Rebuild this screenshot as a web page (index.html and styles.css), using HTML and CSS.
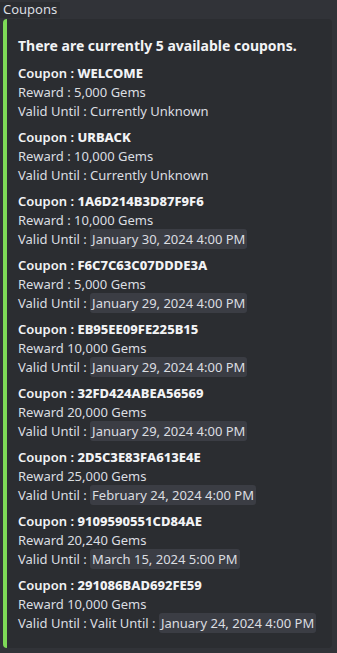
FILE: index.html
```html
<!DOCTYPE html>
<html lang="en">
<head>
  <meta charset="UTF-8">
  <title>Coupons</title>
  <link rel="stylesheet" href="styles.css">
</head>
<body>
  <div class="label">Coupons</div>

  <div class="embed">
    <div class="title">There are currently 5 available coupons.</div>

    <div class="coupon">
      <div class="code">Coupon : <b>WELCOME</b></div>
      <div>Reward : 5,000 Gems</div>
      <div>Valid Until : Currently Unknown</div>
    </div>

    <div class="coupon">
      <div class="code">Coupon : <b>URBACK</b></div>
      <div>Reward : 10,000 Gems</div>
      <div>Valid Until : Currently Unknown</div>
    </div>

    <div class="coupon">
      <div class="code">Coupon : <b>1A6D214B3D87F9F6</b></div>
      <div>Reward : 10,000 Gems</div>
      <div>Valid Until : <span class="time">January 30, 2024 4:00 PM</span></div>
    </div>

    <div class="coupon">
      <div class="code">Coupon : <b>F6C7C63C07DDDE3A</b></div>
      <div>Reward : 5,000 Gems</div>
      <div>Valid Until : <span class="time">January 29, 2024 4:00 PM</span></div>
    </div>

    <div class="coupon">
      <div class="code">Coupon : <b>EB95EE09FE225B15</b></div>
      <div>Reward 10,000 Gems</div>
      <div>Valid Until : <span class="time">January 29, 2024 4:00 PM</span></div>
    </div>

    <div class="coupon">
      <div class="code">Coupon : <b>32FD424ABEA56569</b></div>
      <div>Reward 20,000 Gems</div>
      <div>Valid Until : <span class="time">January 29, 2024 4:00 PM</span></div>
    </div>

    <div class="coupon">
      <div class="code">Coupon : <b>2D5C3E83FA613E4E</b></div>
      <div>Reward 25,000 Gems</div>
      <div>Valid Until : <span class="time">February 24, 2024 4:00 PM</span></div>
    </div>

    <div class="coupon">
      <div class="code">Coupon : <b>9109590551CD84AE</b></div>
      <div>Reward 20,240 Gems</div>
      <div>Valid Until : <span class="time">March 15, 2024 5:00 PM</span></div>
    </div>

    <div class="coupon">
      <div class="code">Coupon : <b>291086BAD692FE59</b></div>
      <div>Reward 10,000 Gems</div>
      <div>Valid Until : Valit Until : <span class="time">January 24, 2024 4:00 PM</span></div>
    </div>
  </div>
</body>
</html>
```

FILE: styles.css
```css
body {
  margin: 0;
  background: #313338;
  font-family: 'Noto Sans', 'Open Sans', sans-serif;
  font-size: 13px;
  color: #dbdee1;
}

.label {
  display: inline-block;
  background: #2b2d31;
  color: #dbdee1;
  padding: 0 3px;
  height: 16px;
  line-height: 14px;
  font-size: 13px;
}

.embed {
  background: #2b2d31;
  border-left: 4px solid #7ed957;
  border-radius: 4px;
  margin: 1px 5px 7px 3px;
  padding: 18px 12px 15px 11px;
}

.title {
  color: #f2f3f5;
  font-weight: 700;
  font-size: 14px;
  line-height: 18px;
  margin-bottom: 9px;
}

.coupon {
  line-height: 19px;
  margin-bottom: 7px;
}

.coupon:last-child {
  margin-bottom: 0;
}

.code {
  color: #f2f3f5;
  font-weight: 600;
}

.code b {
  font-weight: 800;
}

.time {
  background: #3b3d44;
  border-radius: 3px;
  padding: 1px 2px;
}
```
